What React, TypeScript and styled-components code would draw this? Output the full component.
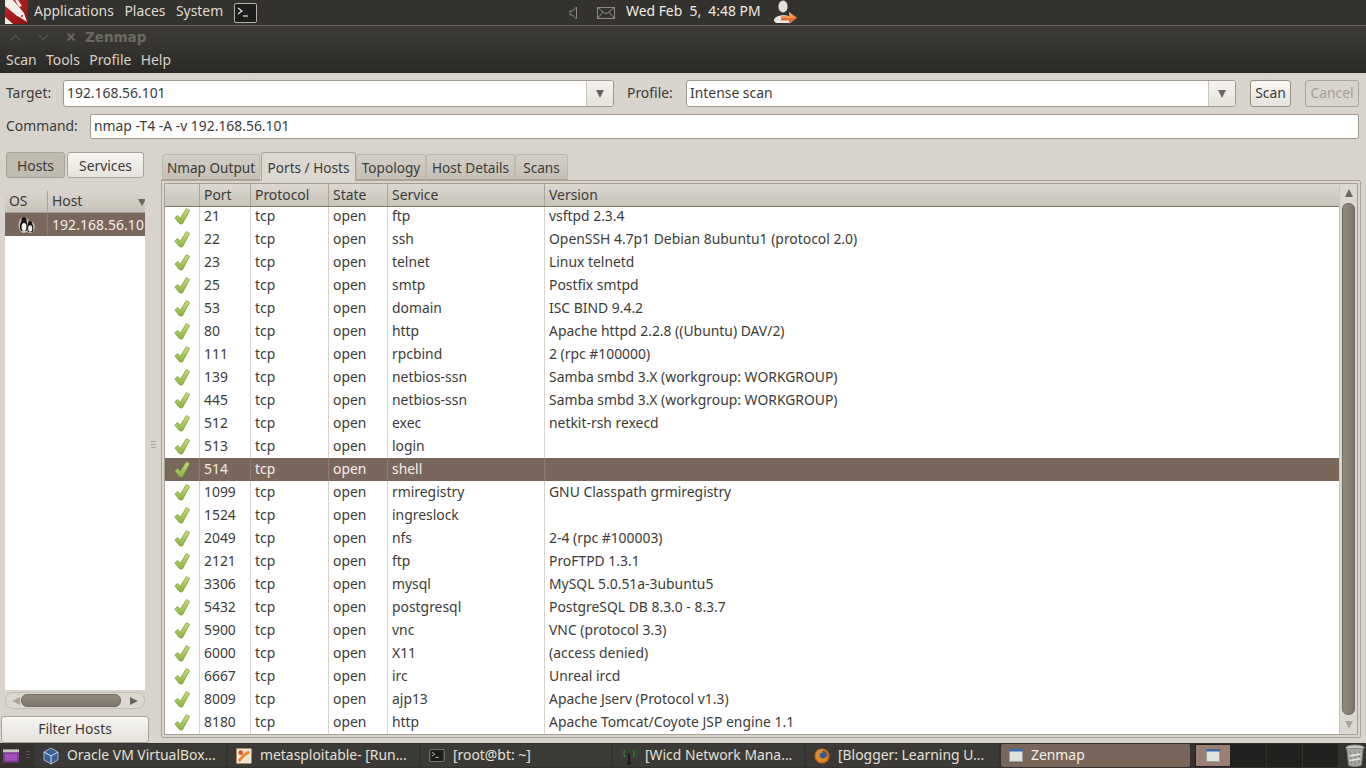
import styled, { createGlobalStyle } from "styled-components";

const GlobalStyle = createGlobalStyle`
  html, body {
    margin: 0;
    padding: 0;
    background: #d8d4cd;
  }
  * {
    box-sizing: border-box;
  }
`;

const Page = styled.div`
  width: 1366px;
  height: 768px;
  overflow: hidden;
  display: flex;
  flex-direction: column;
  background: #d8d4cd;
  color: #3c3b37;
  font-family: "Noto Sans", "Open Sans", sans-serif;
  font-size: 13.9px;
`;

const TopPanel = styled.div`
  height: 26px;
  flex: none;
  display: flex;
  align-items: center;
  background: #33322e;
  border-bottom: 1px solid #6b6962;
  color: #dfdbd2;
  position: relative;
`;

const PanelLogo = styled.span`
  display: flex;
  margin-right: 5px;
`;

const PanelMenu = styled.span`
  margin-right: 10.6px;
  padding-bottom: 4px;
`;

const PanelCentre = styled.div`
  position: absolute;
  left: 569px;
  top: 0;
  height: 25px;
  display: flex;
  align-items: center;
  color: #f0ece4;
`;

const PanelClock = styled.span`
  margin: 0 11px 0 11px;
  padding-bottom: 4px;
`;

const PanelGap = styled.span`
  width: 19px;
`;

const WindowHead = styled.div`
  height: 47px;
  flex: none;
  background: linear-gradient(#3c3b36, #35332f 50%, #2b2926);
`;

const TitleBar = styled.div`
  height: 24px;
  display: flex;
  align-items: center;
  padding: 0 0 2px 10px;
  color: #6c6a60;
`;

const WindowButton = styled.span`
  width: 28px;
  display: flex;
`;

const TitleText = styled.span`
  font-family: "DejaVu Sans", sans-serif;
  font-weight: 700;
  font-size: 13.5px;
  margin-left: -9px;
`;

const MenuBar = styled.div`
  height: 23px;
  display: flex;
  align-items: center;
  padding: 0 0 4px 6px;
  gap: 9.4px;
  color: #d6d2c9;
`;

const Content = styled.div`
  flex: 1;
  min-height: 0;
  display: flex;
  flex-direction: column;
`;

const TargetRow = styled.div`
  height: 27px;
  margin-top: 7px;
  padding: 0 6px;
  display: flex;
  align-items: center;
  flex: none;
`;

const FieldLabel = styled.span<{ $width: number; $gap?: number }>`
  width: ${(p) => p.$width}px;
  margin-left: ${(p) => p.$gap ?? 0}px;
  padding-bottom: 2px;
  flex: none;
`;

const Combo = styled.div<{ $width: number }>`
  width: ${(p) => p.$width}px;
  height: 27px;
  flex: none;
  display: flex;
  background: #fff;
  border: 1px solid #a09a8e;
  border-radius: 3px;
  padding-left: 3px;
  align-items: center;
  color: #3c3b37;
`;

const ComboText = styled.span`
  flex: 1;
  padding-bottom: 2px;
`;

const ComboArrow = styled.span`
  width: 27px;
  height: 25px;
  display: flex;
  align-items: center;
  justify-content: center;
  background: linear-gradient(#f5f3f0, #e6e3dd);
  border-left: 1px solid #c9c5bc;
  border-radius: 0 2px 2px 0;
`;

const ToolButton = styled.div<{ $disabled?: boolean }>`
  height: 27px;
  width: ${(p) => (p.$disabled ? 54 : 41)}px;
  flex: none;
  display: flex;
  align-items: center;
  justify-content: center;
  padding-bottom: 2px;
  border: 1px solid ${(p) => (p.$disabled ? "#a9a398" : "#94907f")};
  border-radius: 3px;
  background: ${(p) =>
    p.$disabled ? "#d8d4cd" : "linear-gradient(#f8f7f5, #e5e2dc)"};
  color: ${(p) => (p.$disabled ? "#a5a196" : "#3c3b37")};
  margin-left: 14px;
`;

const CommandRow = styled.div`
  height: 25px;
  margin-top: 7px;
  padding: 0 7px 0 6px;
  display: flex;
  align-items: center;
  flex: none;
`;

const CommandInput = styled.div`
  flex: 1;
  height: 25px;
  background: #fff;
  border: 1px solid #a09a8e;
  border-radius: 2px;
  padding: 0 0 2px 3px;
  display: flex;
  align-items: center;
`;

const Main = styled.div`
  flex: 1;
  min-height: 0;
  display: flex;
  margin-top: 13px;
  padding-bottom: 5px;
`;

const Sidebar = styled.div`
  width: 149px;
  flex: none;
  display: flex;
  flex-direction: column;
  padding-left: 1px;
`;

const ViewSwitch = styled.div`
  display: flex;
  gap: 2px;
  padding-left: 5px;
  height: 26px;
  flex: none;
`;

const ViewButton = styled.div<{ $active?: boolean; $width: number }>`
  width: ${(p) => p.$width}px;
  display: flex;
  align-items: center;
  justify-content: center;
  border: 1px solid #a9a398;
  border-radius: 3px;
  background: ${(p) =>
    p.$active ? "#c0bbb0" : "linear-gradient(#f6f5f2, #e6e3dd)"};
`;

const HostList = styled.div`
  margin: 13px 0 0 4px;
  width: 140px;
  height: 499px;
  flex: none;
  background: #fff;
  overflow: hidden;
`;

const HostHead = styled.div`
  height: 22px;
  display: grid;
  grid-template-columns: 43px 1fr;
  padding-bottom: 0;
  background: linear-gradient(#d9d5ce, #c8c3b8);
  border-bottom: 1px solid #a59f93;
`;

const HeadCell = styled.div`
  display: flex;
  align-items: center;
  padding: 0 0 1px 4px;
  border-right: 1px solid #aaa598;
  white-space: nowrap;
  overflow: hidden;
  position: relative;
  &:last-child {
    border-right: none;
  }
`;

const HostHeadCell = styled(HeadCell)`
  padding-bottom: 3px;
`;

const SortMark = styled.span`
  position: absolute;
  right: -1px;
  top: 8px;
  width: 0;
  height: 0;
  border-left: 4px solid transparent;
  border-right: 4px solid transparent;
  border-top: 7px solid #6a675f;
`;

const HostRow = styled.div`
  height: 23px;
  display: grid;
  grid-template-columns: 43px 1fr;
  background: #7a675c;
  color: #f2efe9;
  white-space: nowrap;
  overflow: hidden;
`;

const HostIcon = styled.div`
  display: flex;
  align-items: center;
  justify-content: center;
  border-right: 1px solid #8b7b70;
`;

const HostAddr = styled.div`
  display: flex;
  align-items: center;
  padding: 0 0 1px 4px;
  letter-spacing: 0.1px;
  overflow: hidden;
`;

const HScroll = styled.div`
  margin: 2px 0 0 4px;
  width: 140px;
  height: 17px;
  flex: none;
  border: 1px solid #c4bfb5;
  border-radius: 8px;
  background: #dcd8d1;
  display: flex;
  align-items: center;
  justify-content: space-between;
  padding: 0 6px;
`;

const HThumb = styled.div`
  width: 100px;
  height: 13px;
  margin-right: 8px;
  border-radius: 6px;
  background: linear-gradient(#918b7e, #7d776b);
  border: 1px solid #6f6a5f;
`;

const FilterButton = styled.div`
  width: 148px;
  height: 27px;
  margin-top: 7px;
  flex: none;
  display: flex;
  align-items: center;
  justify-content: center;
  padding-bottom: 3px;
  border: 1px solid #a9a398;
  border-radius: 3px;
  background: linear-gradient(#f6f5f2, #e4e1db);
`;

const Handle = styled.div`
  width: 12px;
  flex: none;
  display: flex;
  align-items: center;
  padding-left: 2px;
`;

const Grip = styled.span`
  width: 5px;
  height: 9px;
  background: repeating-linear-gradient(#a9a49a 0 1px, transparent 1px 3px);
`;

const Notebook = styled.div`
  width: 1200px;
  flex: none;
  display: flex;
  flex-direction: column;
`;

const TabStrip = styled.div`
  height: 28px;
  flex: none;
  display: flex;
  align-items: flex-end;
  padding-left: 1px;
  position: relative;
  z-index: 1;
`;

const Tab = styled.div<{ $active?: boolean; $width: number }>`
  width: ${(p) => p.$width}px;
  height: ${(p) => (p.$active ? 29 : 26)}px;
  flex: none;
  display: flex;
  align-items: center;
  justify-content: center;
  font-size: 13.6px;
  border: 1px solid ${(p) => (p.$active ? "#a9a398" : "#bdb8ad")};
  border-bottom: ${(p) => (p.$active ? "none" : "1px solid #a9a398")};
  border-radius: 3px 3px 0 0;
  background: ${(p) =>
    p.$active ? "#dcd8d1" : "linear-gradient(#d3cfc8, #c5c0b5)"};
  margin-bottom: ${(p) => (p.$active ? -1 : 0)}px;
  margin-left: ${(p) => (p.$active ? 1 : 0)}px;
`;

const TabPanel = styled.div`
  flex: 1;
  min-height: 0;
  border: 1px solid #a9a398;
  padding: 2px;
  background: #dad6cf;
  border-radius: 0 2px 2px 2px;
`;

const TableFrame = styled.div`
  height: 100%;
  display: flex;
  border: 1px solid #a59f93;
  background: #fff;
`;

const Table = styled.div`
  flex: 1;
  min-width: 0;
  display: flex;
  flex-direction: column;
  overflow: hidden;
`;

const columns = "35px 51px 78px 59px 157px 1fr";

const TableHead = styled.div`
  height: 23px;
  flex: none;
  display: grid;
  grid-template-columns: ${columns};
  background: linear-gradient(#dcd8d1, #c8c3b8);
  border-bottom: 1px solid #7d776b;
  position: relative;
  z-index: 1;
`;

// the list is scrolled a little in the reference, so the first row slides under the head
const TableBody = styled.div`
  margin-top: -2px;
  display: flex;
  flex-direction: column;
`;

const TableRow = styled.div<{ $selected?: boolean }>`
  height: 23px;
  flex: none;
  display: grid;
  grid-template-columns: ${columns};
  background: ${(p) => (p.$selected ? "#7a675c" : "#fff")};
  color: ${(p) => (p.$selected ? "#f2efe9" : "#3c3b37")};
`;

const Cell = styled.div<{ $selected?: boolean }>`
  display: flex;
  align-items: center;
  padding: 0 0 2px 4px;
  border-right: 1px solid ${(p) => (p.$selected ? "#8b7b70" : "#d6d3cd")};
  white-space: nowrap;
  &:last-child {
    border-right: none;
  }
`;

const CheckCell = styled(Cell)`
  padding: 0 0 0 9px;
`;

const VScroll = styled.div`
  width: 18px;
  flex: none;
  background: #dcd8d1;
  border-left: 1px solid #c9c5bb;
  display: flex;
  flex-direction: column;
  align-items: center;
  justify-content: space-between;
  padding: 5px 0;
`;

const VThumb = styled.div`
  width: 13px;
  flex: 1;
  margin: 6px 0;
  border-radius: 6px;
  background: linear-gradient(90deg, #918b7e, #7d776b);
  border: 1px solid #6f6a5f;
`;

const TaskBar = styled.div`
  height: 25px;
  flex: none;
  display: flex;
  align-items: center;
  background: #33322e;
  color: #dfdbd2;
  padding-left: 3px;
`;

const ShowDesktop = styled.div`
  width: 32px;
  flex: none;
  display: flex;
  align-items: center;
  gap: 7px;
`;

const TaskGrip = styled.span`
  width: 4px;
  height: 9px;
  background: repeating-linear-gradient(#56544e 0 1px, transparent 1px 3px);
`;

const TaskItem = styled.div<{ $active?: boolean; $width: number }>`
  width: ${(p) => p.$width}px;
  height: 23px;
  flex: none;
  margin-right: 2px;
  display: flex;
  align-items: center;
  gap: 8px;
  padding: 0 0 0 8px;
  white-space: nowrap;
  overflow: hidden;
  border-radius: 2px;
  background: ${(p) => (p.$active ? "#78665b" : "#3b3a36")};
  color: ${(p) => (p.$active ? "#f2efe9" : "#e4e0d8")};
`;

const TaskLabel = styled.span`
  padding-bottom: 2px;
`;

const Switcher = styled.div`
  width: 144px;
  height: 23px;
  flex: none;
  margin: 0 5px 0 3px;
  display: grid;
  grid-template-columns: repeat(4, 36px);
  background: #22211f;
  border-radius: 2px;
`;

const Workspace = styled.div<{ $active?: boolean }>`
  display: flex;
  align-items: center;
  justify-content: center;
  margin: ${(p) => (p.$active ? "1px" : "0")};
  background: ${(p) => (p.$active ? "#9a8072" : "transparent")};
  border-right: ${(p) => (p.$active ? "none" : "1px solid #33322e")};
`;

const ports = [
  ["21", "ftp", "vsftpd 2.3.4"],
  ["22", "ssh", "OpenSSH 4.7p1 Debian 8ubuntu1 (protocol 2.0)"],
  ["23", "telnet", "Linux telnetd"],
  ["25", "smtp", "Postfix smtpd"],
  ["53", "domain", "ISC BIND 9.4.2"],
  ["80", "http", "Apache httpd 2.2.8 ((Ubuntu) DAV/2)"],
  ["111", "rpcbind", "2 (rpc #100000)"],
  ["139", "netbios-ssn", "Samba smbd 3.X (workgroup: WORKGROUP)"],
  ["445", "netbios-ssn", "Samba smbd 3.X (workgroup: WORKGROUP)"],
  ["512", "exec", "netkit-rsh rexecd"],
  ["513", "login", ""],
  ["514", "shell", ""],
  ["1099", "rmiregistry", "GNU Classpath grmiregistry"],
  ["1524", "ingreslock", ""],
  ["2049", "nfs", "2-4 (rpc #100003)"],
  ["2121", "ftp", "ProFTPD 1.3.1"],
  ["3306", "mysql", "MySQL 5.0.51a-3ubuntu5"],
  ["5432", "postgresql", "PostgreSQL DB 8.3.0 - 8.3.7"],
  ["5900", "vnc", "VNC (protocol 3.3)"],
  ["6000", "X11", "(access denied)"],
  ["6667", "irc", "Unreal ircd"],
  ["8009", "ajp13", "Apache Jserv (Protocol v1.3)"],
  ["8180", "http", "Apache Tomcat/Coyote JSP engine 1.1"],
];

function Check() {
  return (
    <svg width="16" height="17" viewBox="0 0 16 17">
      <defs>
        <linearGradient id="checkFill" x1="0" y1="0" x2="0" y2="1">
          <stop offset="0" stopColor="#c8de80" />
          <stop offset="1" stopColor="#8db33c" />
        </linearGradient>
      </defs>
      <path
        d="M0.8 10 L3.6 7.4 L6.4 10.2 L12.3 0.7 L15.6 2.4 L8.4 15.9 L5.8 15.9 Z"
        fill="url(#checkFill)"
        stroke="#7e9e3c"
        strokeWidth="0.8"
        strokeLinejoin="round"
      />
    </svg>
  );
}

function Triangle({ dir, color = "#6a675f", size = 4 }: { dir: "up" | "down" | "left" | "right"; color?: string; size?: number }) {
  const pts = {
    up: "0,8 4,0 8,8",
    down: "0,0 8,0 4,8",
    left: "8,0 8,8 0,4",
    right: "0,0 8,4 0,8",
  }[dir];
  return (
    <svg width={size * 2} height={size * 2} viewBox="0 0 8 8">
      <polygon points={pts} fill={color} />
    </svg>
  );
}

function Terminal({ size = 23 }: { size?: number }) {
  return (
    <svg width={size} height={size - 3} viewBox="0 0 23 20">
      <rect x="0.5" y="0.5" width="22" height="19" rx="1.5" fill="#1d1d1c" stroke="#b5b2aa" />
      <path d="M4 5 L8 8 L4 11" fill="none" stroke="#e6e6e6" strokeWidth="1.2" />
      <path d="M9 13 H14" stroke="#e6e6e6" strokeWidth="1.2" />
    </svg>
  );
}

function Dragon() {
  return (
    <svg width="29" height="25" viewBox="0 0 29 25">
      <defs>
        <linearGradient id="dragonRed" x1="0" y1="0" x2="1" y2="1">
          <stop offset="0" stopColor="#c02424" />
          <stop offset="1" stopColor="#8c1414" />
        </linearGradient>
      </defs>
      <rect x="5" y="0" width="23" height="24" fill="url(#dragonRed)" />
      <path d="M5 0 H13 L19 7 L24 13 L27 22 L21 18 L17 16 L11 11 L5 6 Z" fill="#f4eeea" />
      <path d="M15 0 H18 L22 6 L19 7 Z" fill="#efe7e3" />
      <path d="M5 17 L13 24 H5 Z" fill="#f4eeea" />
      <circle cx="22" cy="16" r="0.9" fill="#8c1414" />
    </svg>
  );
}

function WindowIcon({ w = 14 }: { w?: number }) {
  return (
    <svg width={w} height={w - 1} viewBox="0 0 14 13">
      <rect x="0.5" y="0.5" width="13" height="12" fill="#dfe3de" stroke="#9aa09a" />
      <rect x="0" y="0" width="14" height="2.5" fill="#3f6cb0" />
    </svg>
  );
}

function Penguins() {
  return (
    <svg width="17" height="17" viewBox="0 0 17 17">
      <ellipse cx="6" cy="9" rx="5.4" ry="8" fill="#e9e6e1" opacity="0.7" />
      <ellipse cx="12" cy="11" rx="4.8" ry="6" fill="#e9e6e1" opacity="0.7" />
      <ellipse cx="6" cy="4" rx="2.6" ry="3" fill="#191715" />
      <path d="M3.5 5 C1.5 8 1.5 13 3 15 H8.5 C10 13 9.5 8 8.5 5 Z" fill="#191715" />
      <ellipse cx="6" cy="11" rx="2.4" ry="4" fill="#f6f4ef" />
      <ellipse cx="12" cy="7.5" rx="2.2" ry="2.4" fill="#191715" />
      <path d="M10 8 C8.8 10 9 14 10 16 H14.5 C15.8 14 15.6 10 14.2 8 Z" fill="#191715" />
      <ellipse cx="12.2" cy="12.5" rx="2" ry="3.2" fill="#f6f4ef" />
    </svg>
  );
}

function VBoxIcon() {
  return (
    <svg width="16" height="18" viewBox="0 0 16 18">
      <path d="M8 1 L15 5 V13 L8 17 L1 13 V5 Z" fill="#3a5f96" stroke="#b6c7df" strokeWidth="0.8" />
      <path d="M1 5 L8 9 L15 5 M8 9 V17" fill="none" stroke="#d8e2ef" strokeWidth="1" />
    </svg>
  );
}

function PresentIcon() {
  return (
    <svg width="16" height="16" viewBox="0 0 17 17">
      <rect x="0.5" y="0.5" width="16" height="16" rx="1" fill="#f1e6d2" stroke="#a88f68" />
      <path d="M3 14 L8 8 L14 4" fill="none" stroke="#e8862a" strokeWidth="3" />
      <circle cx="5" cy="5" r="2.5" fill="#d9532c" />
    </svg>
  );
}

function WicdIcon() {
  return (
    <svg width="16" height="18" viewBox="0 0 17 18">
      <path d="M8.5 7 V17 M6 17 H11" stroke="#1a1a18" strokeWidth="2" />
      <path d="M4.5 3 C2.5 5 2.5 8 4.5 10 M12.5 3 C14.5 5 14.5 8 12.5 10" fill="none" stroke="#2f8a3a" strokeWidth="1.3" />
      <path d="M2 1 C-0.5 4 -0.5 9 2 12 M15 1 C17.5 4 17.5 9 15 12" fill="none" stroke="#1f6a2b" strokeWidth="1" />
    </svg>
  );
}

function FirefoxIcon() {
  return (
    <svg width="16" height="16" viewBox="0 0 17 17">
      <circle cx="8.5" cy="8.5" r="8" fill="#c9651e" />
      <circle cx="9" cy="7.5" r="4.5" fill="#2f5c94" />
      <path d="M2 5 C4 1 9 0 12 2 C9 2 8 4 9 5 C6 5 5 8 7 10 C9 12 13 11 14 8 C15 12 11 16 7 15 C3 14 1 9 2 5 Z" fill="#e08a24" />
    </svg>
  );
}

function TrashIcon() {
  return (
    <svg width="24" height="25" viewBox="0 0 24 25">
      <ellipse cx="12" cy="4" rx="10" ry="3" fill="#c9c8c2" stroke="#8b8a84" />
      <path d="M3 5 L5 23 C8 25 16 25 19 23 L21 5 Z" fill="#a9a8a2" stroke="#807f79" />
      <path d="M7 8 L8 22 M12 8 V23 M17 8 L16 22" stroke="#7a7973" />
      <path d="M6 13 L18 11 M6 18 L18 16" stroke="#e4e3de" strokeWidth="2" />
    </svg>
  );
}

function LogoutIcon() {
  return (
    <svg width="25" height="25" viewBox="0 0 25 25">
      <ellipse cx="11" cy="6.5" rx="4.6" ry="6" fill="#e4e1da" />
      <path d="M2 21 C1 14 20 13 20 20 L19 23 H4 Z" fill="#e9e6e0" />
      <path d="M9 16 H17 V12 L25 18 L17 24 V20.5 H9 Z" fill="#e2702a" />
      <path d="M9 16 H17 V12 L25 18 H9 Z" fill="#ef9650" />
    </svg>
  );
}

function MailIcon() {
  return (
    <svg width="18" height="12" viewBox="0 0 18 12">
      <rect x="0.5" y="0.5" width="17" height="11" fill="none" stroke="#8d8b84" />
      <path d="M1 1 L9 7 L17 1 M1 11 L6 5 M17 11 L12 5" fill="none" stroke="#8d8b84" />
    </svg>
  );
}

function SpeakerIcon() {
  return (
    <svg width="9" height="14" viewBox="0 0 9 14">
      <path d="M1 5 H3.5 L7.5 1 V13 L3.5 9 H1 Z" fill="none" stroke="#8d8b84" />
    </svg>
  );
}

function Chevron({ up }: { up?: boolean }) {
  return (
    <svg width="11" height="7" viewBox="0 0 11 7">
      <path d={up ? "M1 6 L5.5 1.5 L10 6" : "M1 1 L5.5 5.5 L10 1"} fill="none" stroke="#56554e" strokeWidth="1.2" />
    </svg>
  );
}

function CloseMark() {
  return (
    <svg width="10" height="10" viewBox="0 0 10 10">
      <path d="M1.5 1.5 L8.5 8.5 M8.5 1.5 L1.5 8.5" stroke="#68665e" strokeWidth="1.8" />
    </svg>
  );
}

function App() {
  return (
    <Page>
      <GlobalStyle />
      <TopPanel>
        <PanelLogo>
          <Dragon />
        </PanelLogo>
        <PanelMenu>Applications</PanelMenu>
        <PanelMenu>Places</PanelMenu>
        <PanelMenu>System</PanelMenu>
        <Terminal />
        <PanelCentre>
          <SpeakerIcon />
          <PanelGap />
          <MailIcon />
          <PanelClock>Wed Feb&nbsp; 5,&nbsp; 4:48 PM</PanelClock>
          <LogoutIcon />
        </PanelCentre>
      </TopPanel>
      <WindowHead>
        <TitleBar>
          <WindowButton>
            <Chevron up />
          </WindowButton>
          <WindowButton>
            <Chevron />
          </WindowButton>
          <WindowButton>
            <CloseMark />
          </WindowButton>
          <TitleText>Zenmap</TitleText>
        </TitleBar>
        <MenuBar>
          <span>Scan</span>
          <span>Tools</span>
          <span>Profile</span>
          <span>Help</span>
        </MenuBar>
      </WindowHead>
      <Content>
        <TargetRow>
          <FieldLabel $width={57}>Target:</FieldLabel>
          <Combo $width={551}>
            <ComboText>192.168.56.101</ComboText>
            <ComboArrow>
              <Triangle dir="down" />
            </ComboArrow>
          </Combo>
          <FieldLabel $width={59} $gap={13}>Profile:</FieldLabel>
          <Combo $width={550}>
            <ComboText>Intense scan</ComboText>
            <ComboArrow>
              <Triangle dir="down" />
            </ComboArrow>
          </Combo>
          <ToolButton>Scan</ToolButton>
          <ToolButton $disabled>Cancel</ToolButton>
        </TargetRow>
        <CommandRow>
          <FieldLabel $width={84}>Command:</FieldLabel>
          <CommandInput>nmap -T4 -A -v 192.168.56.101</CommandInput>
        </CommandRow>
        <Main>
          <Sidebar>
            <ViewSwitch>
              <ViewButton $active $width={59}>Hosts</ViewButton>
              <ViewButton $width={77}>Services</ViewButton>
            </ViewSwitch>
            <HostList>
              <HostHead>
                <HostHeadCell>OS</HostHeadCell>
                <HostHeadCell>
                  Host
                  <SortMark />
                </HostHeadCell>
              </HostHead>
              <HostRow>
                <HostIcon>
                  <Penguins />
                </HostIcon>
                <HostAddr>192.168.56.101</HostAddr>
              </HostRow>
            </HostList>
            <HScroll>
              <Triangle dir="left" color="#a9a59b" />
              <HThumb />
              <Triangle dir="right" />
            </HScroll>
            <FilterButton>Filter Hosts</FilterButton>
          </Sidebar>
          <Handle>
            <Grip />
          </Handle>
          <Notebook>
            <TabStrip>
              <Tab $width={98}>Nmap Output</Tab>
              <Tab $active $width={95}>Ports / Hosts</Tab>
              <Tab $width={70}>Topology</Tab>
              <Tab $width={89}>Host Details</Tab>
              <Tab $width={53}>Scans</Tab>
            </TabStrip>
            <TabPanel>
              <TableFrame>
                <Table>
                  <TableHead>
                    <HeadCell />
                    <HeadCell>Port</HeadCell>
                    <HeadCell>Protocol</HeadCell>
                    <HeadCell>State</HeadCell>
                    <HeadCell>Service</HeadCell>
                    <HeadCell>Version</HeadCell>
                  </TableHead>
                  <TableBody>
                    {ports.map(([port, service, version]) => {
                      const selected = port === "514";
                      return (
                        <TableRow key={port} $selected={selected}>
                          <CheckCell $selected={selected}>
                            <Check />
                          </CheckCell>
                          <Cell $selected={selected}>{port}</Cell>
                          <Cell $selected={selected}>tcp</Cell>
                          <Cell $selected={selected}>open</Cell>
                          <Cell $selected={selected}>{service}</Cell>
                          <Cell $selected={selected}>{version}</Cell>
                        </TableRow>
                      );
                    })}
                  </TableBody>
                </Table>
                <VScroll>
                  <Triangle dir="up" />
                  <VThumb />
                  <Triangle dir="down" color="#a9a59b" />
                </VScroll>
              </TableFrame>
            </TabPanel>
          </Notebook>
        </Main>
      </Content>
      <TaskBar>
        <ShowDesktop>
          <svg width="16" height="14" viewBox="0 0 17 14">
            <rect width="17" height="14" fill="#7d3c8f" />
            <rect x="0" y="0" width="17" height="3" fill="#c9c5bc" />
            <rect x="2" y="5" width="13" height="7" fill="#a14fb8" />
          </svg>
          <TaskGrip />
        </ShowDesktop>
        <TaskItem $width={191}>
          <VBoxIcon />
          <TaskLabel>Oracle VM VirtualBox...</TaskLabel>
        </TaskItem>
        <TaskItem $width={191}>
          <PresentIcon />
          <TaskLabel>metasploitable- [Run...</TaskLabel>
        </TaskItem>
        <TaskItem $width={190}>
          <Terminal size={16} />
          <TaskLabel>[root@bt: ~]</TaskLabel>
        </TaskItem>
        <TaskItem $width={191}>
          <WicdIcon />
          <TaskLabel>[Wicd Network Mana...</TaskLabel>
        </TaskItem>
        <TaskItem $width={193}>
          <FirefoxIcon />
          <TaskLabel>[Blogger: Learning U...</TaskLabel>
        </TaskItem>
        <TaskItem $active $width={189}>
          <WindowIcon />
          <TaskLabel>Zenmap</TaskLabel>
        </TaskItem>
        <Switcher>
          <Workspace $active>
            <WindowIcon />
          </Workspace>
          <Workspace />
          <Workspace />
          <Workspace />
        </Switcher>
        <TrashIcon />
      </TaskBar>
    </Page>
  );
}

export default App;
